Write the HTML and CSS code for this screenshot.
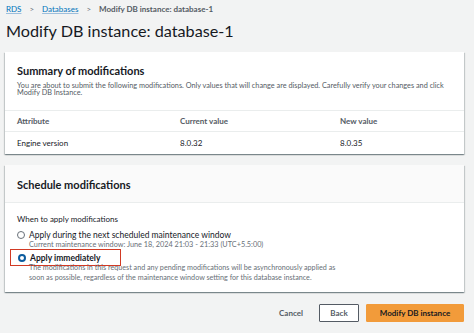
FILE: index.html
```html
<!DOCTYPE html>
<html lang="en">
<head>
  <meta charset="UTF-8">
  <title>Modify DB instance</title>
  <link rel="stylesheet" href="styles.css">
</head>
<body>
  <div class="page">
    <nav class="crumbs">
      <a href="#">RDS</a>
      <span class="sep">&gt;</span>
      <a href="#">Databases</a>
      <span class="sep">&gt;</span>
      <span class="current">Modify DB instance: database-1</span>
    </nav>

    <h1 class="title">Modify DB instance: database-1</h1>

    <div class="card summary">
      <div class="card-head">
        <h2>Summary of modifications</h2>
        <p class="desc">You are about to submit the following modifications. Only values that will change are displayed. Carefully verify your changes and click Modify DB Instance.</p>
      </div>
      <div class="table">
        <div class="row head">
          <div class="cell">Attribute</div>
          <div class="cell">Current value</div>
          <div class="cell">New value</div>
        </div>
        <div class="row last">
          <div class="cell">Engine version</div>
          <div class="cell">8.0.32</div>
          <div class="cell">8.0.35</div>
        </div>
      </div>
    </div>

    <div class="card schedule">
      <div class="card-head boxed">
        <h2>Schedule modifications</h2>
      </div>
      <div class="card-body">
        <div class="label">When to apply modifications</div>

        <div class="option">
          <div class="opt-line">
            <span class="radio"></span>
            <span class="opt-title">Apply during the next scheduled maintenance window</span>
          </div>
          <div class="opt-note">Current maintenance window: June 18, 2024 21:03 - 21:33 (UTC+5.5:00)</div>
        </div>

        <div class="option picked">
          <div class="opt-line">
            <span class="radio on"></span>
            <span class="opt-title">Apply immediately</span>
          </div>
          <div class="opt-note long">The modifications in this request and any pending modifications will be asynchronously applied as soon as possible, regardless of the maintenance window setting for this database instance.</div>
        </div>
      </div>
    </div>

    <div class="actions">
      <button class="btn link">Cancel</button>
      <button class="btn normal">Back</button>
      <button class="btn primary">Modify DB instance</button>
    </div>
  </div>
</body>
</html>
```

FILE: styles.css
```css
body {
  margin: 0;
  background: #f2f3f3;
  font-family: Lato, "Open Sans", sans-serif;
  color: #16191f;
}

.page {
  padding: 3px 10px 0 5px;
}

/* breadcrumbs */
.crumbs {
  display: flex;
  align-items: center;
  gap: 8px;
  font-size: 8px;
  height: 12px;
  padding-left: 1px;
}

.crumbs a {
  color: #0073bb;
  text-decoration: underline;
  text-decoration-color: #9dbfdc;
}

.crumbs .sep {
  color: #687078;
  font-size: 8px;
}

.crumbs .current {
  color: #545b64;
  font-weight: 700;
}

.title {
  margin: 0 0 0 1px;
  font-size: 16.2px;
  font-weight: 400;
  line-height: 32px;
  height: 37px;
}

/* cards */
.card {
  background: #fff;
  box-shadow: 0 1px 1px rgba(0, 28, 36, 0.3), 1px 1px 1px 0 rgba(0, 28, 36, 0.15), -1px 1px 1px 0 rgba(0, 28, 36, 0.15);
}

.card h2 {
  margin: 0;
  font-size: 11px;
  font-weight: 700;
  line-height: 13px;
}

.card-head {
  padding: 12px 12px 0;
}

.desc {
  margin: 5px 0 0;
  font-size: 7.3px;
  line-height: 7px;
  color: #545b64;
}

.table {
  margin-top: 14px;
}

.row {
  display: grid;
  grid-template-columns: 163px 160px 1fr;
  border-top: 1px solid #eaeded;
  height: 20px;
  align-items: center;
  padding-left: 12px;
  font-size: 8px;
}

.row.last {
  height: 22px;
}

.row.head {
  color: #545b64;
  font-weight: 700;
}

.summary {
  margin-bottom: 11px;
}

.card-head.boxed {
  background: #fafafa;
  border-bottom: 1px solid #eaeded;
  height: 24px;
  padding-top: 13px;
}

.card-body {
  padding: 11px 12px 9px;
}

.label {
  font-size: 8px;
  line-height: 10px;
  margin-bottom: 5px;
}

/* radio options */
.option {
  line-height: 7px;
}

.opt-line {
  display: flex;
  align-items: center;
  gap: 4px;
  height: 12px;
}

.picked {
  margin-top: 1px;
}

.picked .opt-line {
  box-sizing: border-box;
  height: 17px;
  width: 111px;
  margin-left: -7px;
  padding-left: 7px;
  border: 1.5px solid #d13a24;
}

.radio {
  flex: none;
  box-sizing: border-box;
  width: 8px;
  height: 8px;
  border: 1px solid #687078;
  border-radius: 50%;
  background: #fff;
}

.radio.on {
  border: 2.5px solid #0b5c9e;
}

.opt-title {
  font-size: 8.5px;
  line-height: 12px;
}

.picked .opt-title {
  font-weight: 700;
  color: #16191f;
}

.opt-note {
  padding-left: 12px;
  font-size: 7.3px;
  line-height: 7px;
  color: #687078;
}

.opt-note.long {
  margin-top: -3px;
  line-height: 10px;
  font-size: 7.2px;
  max-width: 316px;
}

/* actions */
.actions {
  display: flex;
  justify-content: flex-end;
  align-items: center;
  gap: 7px;
  padding-top: 12px;
}

.btn {
  font-family: inherit;
  font-size: 8px;
  font-weight: 700;
  height: 18px;
  padding: 0;
  border-radius: 1px;
  cursor: pointer;
}

.btn.link {
  background: none;
  border: none;
  color: #545b64;
  margin-right: 9px;
}

.btn.normal {
  background: #fff;
  border: 1px solid #545b64;
  color: #545b64;
  width: 40px;
}

.btn.primary {
  background: #f29b3a;
  border: 1px solid #f29b3a;
  color: #16191f;
  width: 98px;
}
```
